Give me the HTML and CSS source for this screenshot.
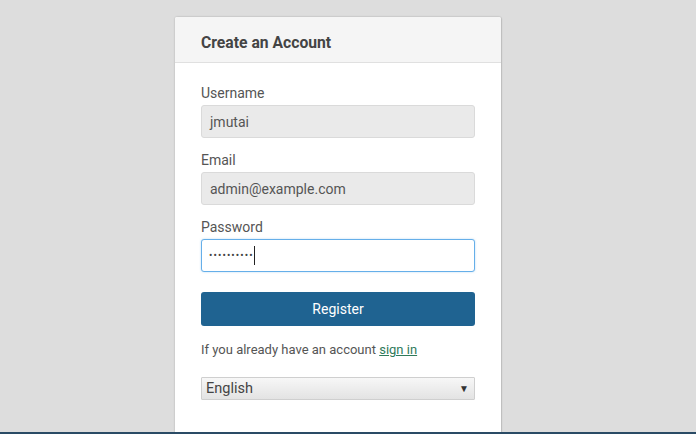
FILE: index.html
```html
<!DOCTYPE html>
<html lang="en">
<head>
<meta charset="utf-8">
<title>Create an Account</title>
<link rel="stylesheet" href="styles.css">
</head>
<body>
<div class="page">
  <div class="card">
    <div class="card-header">Create an Account</div>
    <form class="card-body">
      <div class="field">
        <label class="label">Username</label>
        <div class="input filled">jmutai</div>
      </div>
      <div class="field">
        <label class="label">Email</label>
        <div class="input filled">admin@example.com</div>
      </div>
      <div class="field">
        <label class="label">Password</label>
        <div class="input focused"><span class="dots">••••••••••</span><span class="caret"></span></div>
      </div>
      <div class="btn">Register</div>
      <p class="note">If you already have an account <a href="#" class="link">sign in</a></p>
      <div class="select"><span>English</span><span class="arrow">▼</span></div>
    </form>
  </div>
</div>
<div class="bottom-bar"></div>
</body>
</html>
```
FILE: styles.css
```css
* { box-sizing: border-box; }
html, body { margin: 0; height: 100%; }
body {
  background: #dddddd;
  font-family: Roboto, "Liberation Sans", sans-serif;
  color: #555;
  overflow: hidden;
  display: flex;
  flex-direction: column;
}
.page {
  flex: 1;
  display: flex;
  justify-content: flex-start;
  padding-top: 17px;
  padding-left: 175px;
  overflow: hidden;
}
.card {
  width: 326px;
  background: #fff;
  border-radius: 2px 2px 0 0;
  box-shadow: 0 0 2px rgba(0,0,0,0.25), 1px 0 1px rgba(0,0,0,0.08);
  align-self: flex-start;
  min-height: 430px;
}
.card-header {
  height: 46px;
  background: #f5f5f5;
  border-bottom: 1px solid #e0e0e0;
  padding: 5px 26px 0 26px;
  display: flex;
  align-items: center;
  font-weight: 700;
  font-size: 15.7px;
  color: #444;
  border-radius: 2px 2px 0 0;
}
.card-body {
  padding: 20px 26px 0 26px;
  margin: 0;
  display: flex;
  flex-direction: column;
}
.field {
  display: flex;
  flex-direction: column;
  margin-bottom: 12px;
}
.label {
  font-size: 14px;
  line-height: 20px;
  margin-bottom: 2px;
  color: #555;
}
.input {
  height: 33px;
  border-radius: 3px;
  padding: 0 8px;
  display: flex;
  align-items: center;
  font-size: 14px;
  color: #555;
}
.input.filled {
  background: #eaeaea;
  border: 1px solid #dadada;
}
.input.focused {
  background: #fff;
  border: 1px solid #66afe9;
  box-shadow: 0 0 2px rgba(102,175,233,0.5);
  padding-left: 7px;
}
.dots {
  font-size: 10px;
  letter-spacing: 1.1px;
  color: #444;
}
.caret {
  display: inline-block;
  width: 1px;
  height: 19px;
  background: #222;
  margin-left: 0;
}
.btn {
  margin-top: 8px;
  height: 34px;
  background: #1f6391;
  border-radius: 3px;
  color: #fff;
  font-size: 14px;
  display: flex;
  align-items: center;
  justify-content: center;
}
.note {
  margin: 14px 0 0 0;
  font-size: 13px;
  line-height: 20px;
  color: #555;
}
.link {
  color: #2f7a5a;
  text-decoration: underline;
}
.select {
  margin-top: 17px;
  height: 23px;
  border: 1px solid #cfcfcf;
  border-radius: 1px;
  background: linear-gradient(#f7f7f7, #e3e3e3);
  display: flex;
  align-items: center;
  justify-content: space-between;
  padding: 0 5px 0 4px;
  font-size: 14.5px;
  color: #444;
}
.arrow {
  font-size: 10px;
  color: #333;
}
.bottom-bar {
  height: 2px;
  background: #2a4b65;
  flex: none;
}
```
